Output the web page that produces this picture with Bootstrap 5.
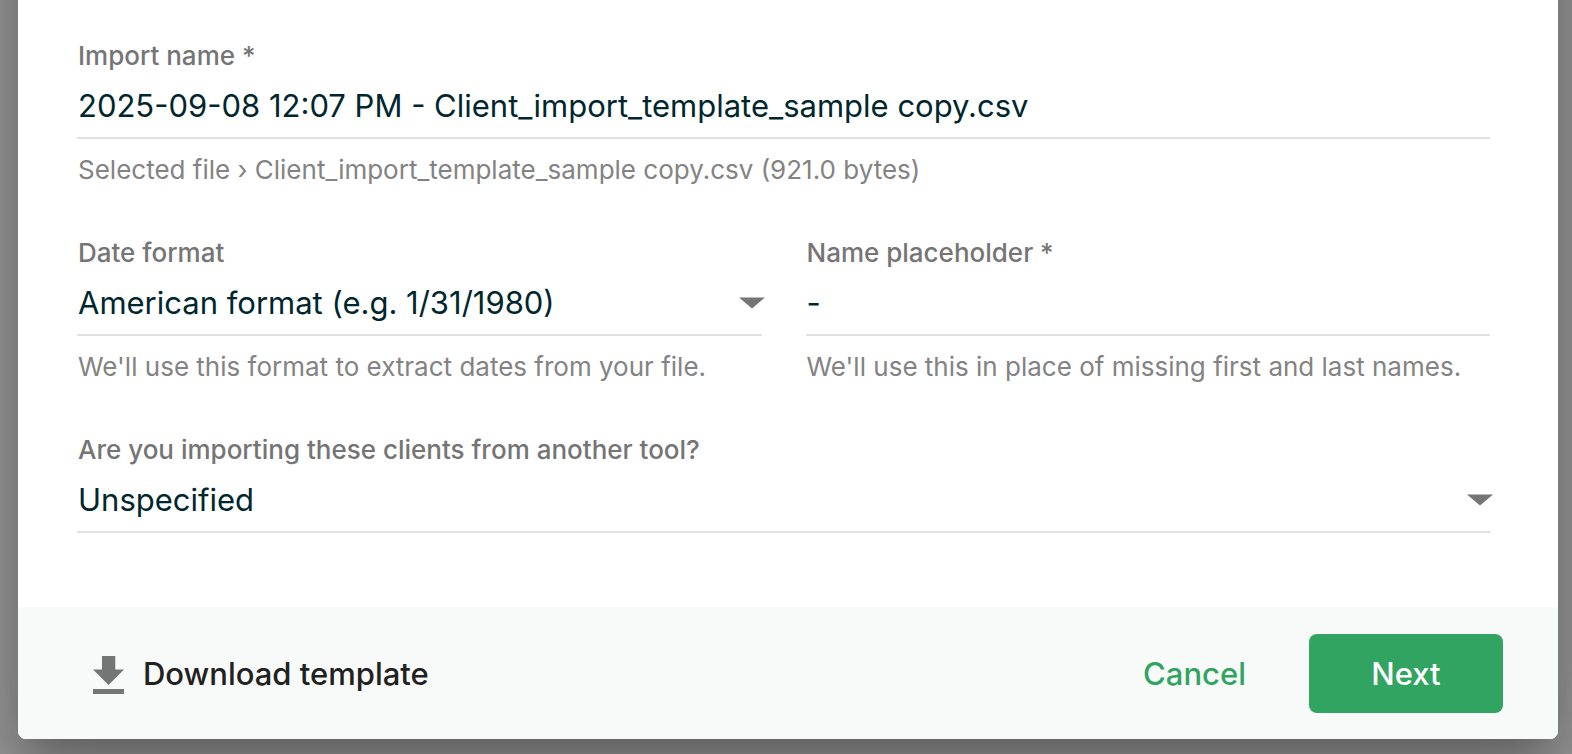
<!DOCTYPE html>
<html lang="en">
<head>
<meta charset="utf-8">
<meta name="viewport" content="width=device-width, initial-scale=1">
<title>Import clients</title>
<link href="https://cdn.jsdelivr.net/npm/bootstrap@5.3.0/dist/css/bootstrap.min.css" rel="stylesheet">
<style>
  body { font-family: Inter, "Liberation Sans", sans-serif; background: #979797; overflow-x: hidden; }
  /* the dialog's top edge sits above the scrolled view */
  .import-dialog {
    margin: -160px 14px 15px 18px;
    padding-top: 160px;
    border-radius: 8px;
    box-shadow: 0 22px 30px -14px rgba(0,0,0,.2), 0 48px 76px 6px rgba(0,0,0,.14), 0 18px 92px 16px rgba(0,0,0,.12);
  }
  .import-fields { padding: 36px 68px 74px 59px; gap: 48px 44px; }
  .import-fields .half { flex: 1 1 0; min-width: 0; }
  .field-label { display: block; padding-left: 1px; font-size: 26px; line-height: 40px; font-weight: 500; color: #757575; }
  .field-control {
    display: block; width: 100%; height: 63px; padding: 0 0 2px 1px; border: 0; border-bottom: 2px solid #e0e0e0;
    background: transparent; color: #00262e; font-size: 31px; line-height: 40px; border-radius: 0;
    appearance: none; outline: 0;
  }
  .field-help { margin: 15px 0 0; padding-left: 1px; font-size: 26px; line-height: 31px; color: #838383; }
  .field-arrow { position: absolute; right: -3px; top: 24px; pointer-events: none; }
  .import-footer { background: #f8faf9; padding: 27px 55px 26px 59px; border-radius: 0 0 8px 8px; }
  .action { font-size: 31px; line-height: 40px; font-weight: 500; border: 0; border-radius: 8px; background: none; padding: 20px 16px 19px; }
  .action-cancel { color: #31a462; margin-right: 31px; padding: 20px 32px 19px; }
  .action-next { background: #31a462; color: #fff; width: 194px; }
  .action-download { color: #212121; text-decoration: none; gap: 19px; }
</style>
<script src="https://cdn.jsdelivr.net/npm/bootstrap@5.3.0/dist/js/bootstrap.bundle.min.js"></script>
</head>
<body>
<form class="import-dialog bg-white" onsubmit="return false">
  <div class="import-fields d-flex flex-wrap">
    <div class="w-100">
      <label class="field-label" for="importName">Import name *</label>
      <input class="field-control" id="importName" type="text" value="2025-09-08 12:07 PM - Client_import_template_sample copy.csv">
      <p class="field-help">Selected file › Client_import_template_sample copy.csv (921.0 bytes)</p>
    </div>
    <div class="half">
      <label class="field-label" for="dateFormat">Date format</label>
      <div class="position-relative">
        <select class="field-control" id="dateFormat"><option>American format (e.g. 1/31/1980)</option></select>
        <svg class="field-arrow" width="26" height="12" viewBox="0 0 26 12" aria-hidden="true"><path fill="#757575" d="M0 .5h26L13 11.5z"/></svg>
      </div>
      <p class="field-help">We'll use this format to extract dates from your file.</p>
    </div>
    <div class="half">
      <label class="field-label" for="namePlaceholder">Name placeholder *</label>
      <input class="field-control" id="namePlaceholder" type="text" value="-">
      <p class="field-help">We'll use this in place of missing first and last names.</p>
    </div>
    <div class="w-100">
      <label class="field-label" for="sourceTool">Are you importing these clients from another tool?</label>
      <div class="position-relative">
        <select class="field-control" id="sourceTool"><option>Unspecified</option></select>
        <svg class="field-arrow" width="26" height="12" viewBox="0 0 26 12" aria-hidden="true"><path fill="#757575" d="M0 .5h26L13 11.5z"/></svg>
      </div>
    </div>
  </div>
  <div class="import-footer d-flex align-items-center">
    <a class="action action-download d-flex align-items-center me-auto" href="#">
      <svg width="31" height="40" viewBox="0 0 31 40" aria-hidden="true"><path fill="#757575" d="M9 2h13.300v13.500H31L15.500 31 0 15.500h9zM0 35h31v5H0z"/></svg>
      Download template
    </a>
    <button class="action action-cancel" type="button">Cancel</button>
    <button class="action action-next" type="submit">Next</button>
  </div>
</form>
</body>
</html>
